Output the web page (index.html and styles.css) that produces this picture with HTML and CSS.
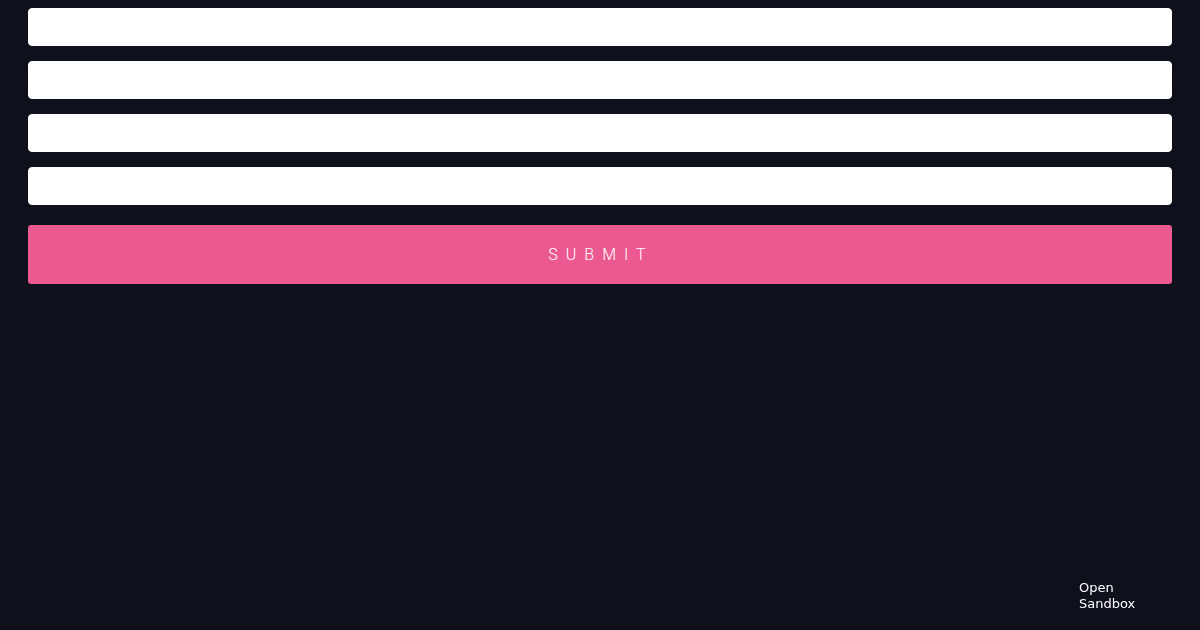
FILE: index.html
```html
<!DOCTYPE html>
<html>
<head>
<meta charset="utf-8">
<link rel="stylesheet" href="styles.css">
</head>
<body>
<form class="form">
  <input class="field" type="text">
  <input class="field" type="text">
  <input class="field" type="text">
  <input class="field" type="text">
  <button class="submit" type="button">Submit</button>
</form>
<a class="sandbox-link">Open<br>Sandbox</a>
</body>
</html>
```
FILE: styles.css
```css
html, body {
  margin: 0;
  padding: 0;
  background: #0e101c;
  height: 100%;
}
body {
  font-family: "DejaVu Sans", sans-serif;
}
.form {
  display: flex;
  flex-direction: column;
  gap: 15px;
  padding: 8px 28px;
}
.field {
  display: block;
  box-sizing: border-box;
  width: 100%;
  height: 38px;
  border-radius: 4px;
  border: 1px solid #fff;
  background: #fff;
  padding: 10px 15px;
  font-size: 14px;
  margin: 0;
}
.submit {
  margin-top: 5px;
  height: 59px;
  box-sizing: border-box;
  background: #ec5990;
  color: #fff;
  border: none;
  border-radius: 3px;
  text-transform: uppercase;
  font-family: Roboto, sans-serif;
  font-size: 16px;
  font-weight: 300;
  letter-spacing: 8px;
  padding: 0 0 0 2px;
}
.sandbox-link {
  position: fixed;
  left: 1079px;
  top: 580px;
  color: #fff;
  font-size: 13px;
  line-height: 16px;
}
```
